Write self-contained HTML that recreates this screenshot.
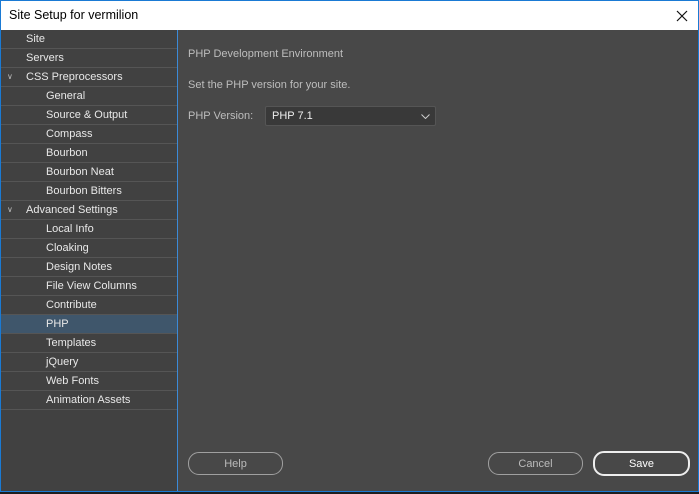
<!DOCTYPE html>
<html><head><style>
body{margin:0;width:699px;height:494px;background:#1e1e1e;font-family:"Liberation Sans",sans-serif;font-size:11px;overflow:hidden;position:relative}
.win{position:absolute;left:0;top:0;width:697px;height:490px;border:1px solid #1a7ad4;background:#484848}
.title{position:absolute;left:0;top:0;width:697px;height:29px;background:#fff;color:#000;font-size:12.5px;line-height:29px}
.title span{position:absolute;left:8px}
.x{position:absolute;right:10px;top:9px}
.left{position:absolute;left:0;top:29px;width:176px;height:461px;background:#414141;border-right:1px solid #3b8ad8}
.row{height:18px;border-bottom:1px solid #555;color:#e8e8e8;line-height:18px;position:relative}
.l1{padding-left:25px}.l2{padding-left:45px}
.sel{background:#3f566b}
.chev{position:absolute;left:6px;top:0;color:#bbb;font-size:8px}
.r{position:absolute;color:#bdbdbd}
.sel2{position:absolute;left:264px;top:105px;width:169px;height:18px;background:#393939;border:1px solid #555;border-radius:2px;color:#eee;line-height:18px}
.btn{position:absolute;top:451px;width:93px;height:21px;border:1px solid #a0a0a0;border-radius:11px;color:#bbb;text-align:center;line-height:22px}
</style></head><body>
<div class="win">
<div class="title"><span>Site Setup for vermilion</span>
<svg class="x" width="12" height="12"><path d="M1 1L11 11M11 1L1 11" stroke="#111" stroke-width="1.2"/></svg></div>
<div class="left">
<div class="row l1">Site</div>
<div class="row l1">Servers</div>
<div class="row l1"><span class="chev">&#8744;</span>CSS Preprocessors</div>
<div class="row l2">General</div>
<div class="row l2">Source &amp; Output</div>
<div class="row l2">Compass</div>
<div class="row l2">Bourbon</div>
<div class="row l2">Bourbon Neat</div>
<div class="row l2">Bourbon Bitters</div>
<div class="row l1"><span class="chev">&#8744;</span>Advanced Settings</div>
<div class="row l2">Local Info</div>
<div class="row l2">Cloaking</div>
<div class="row l2">Design Notes</div>
<div class="row l2">File View Columns</div>
<div class="row l2">Contribute</div>
<div class="row l2 sel">PHP</div>
<div class="row l2">Templates</div>
<div class="row l2">jQuery</div>
<div class="row l2">Web Fonts</div>
<div class="row l2">Animation Assets</div>
</div>
<div class="r" style="left:187px;top:47px">PHP Development Environment</div>
<div class="r" style="left:187px;top:78px">Set the PHP version for your site.</div>
<div class="r" style="left:187px;top:109px">PHP Version:</div>
<div class="sel2"><span style="margin-left:6px">PHP 7.1</span><svg style="position:absolute;right:5px;top:7px" width="9" height="5"><path d="M0.5 0.5L4.5 4.5L8.5 0.5" stroke="#ccc" fill="none"/></svg></div>
<div class="btn" style="left:187px">Help</div>
<div class="btn" style="left:487px">Cancel</div>
<div class="btn" style="left:592px;border:2px solid #eee;top:450px;color:#fff">Save</div>
</div>
</body></html>
